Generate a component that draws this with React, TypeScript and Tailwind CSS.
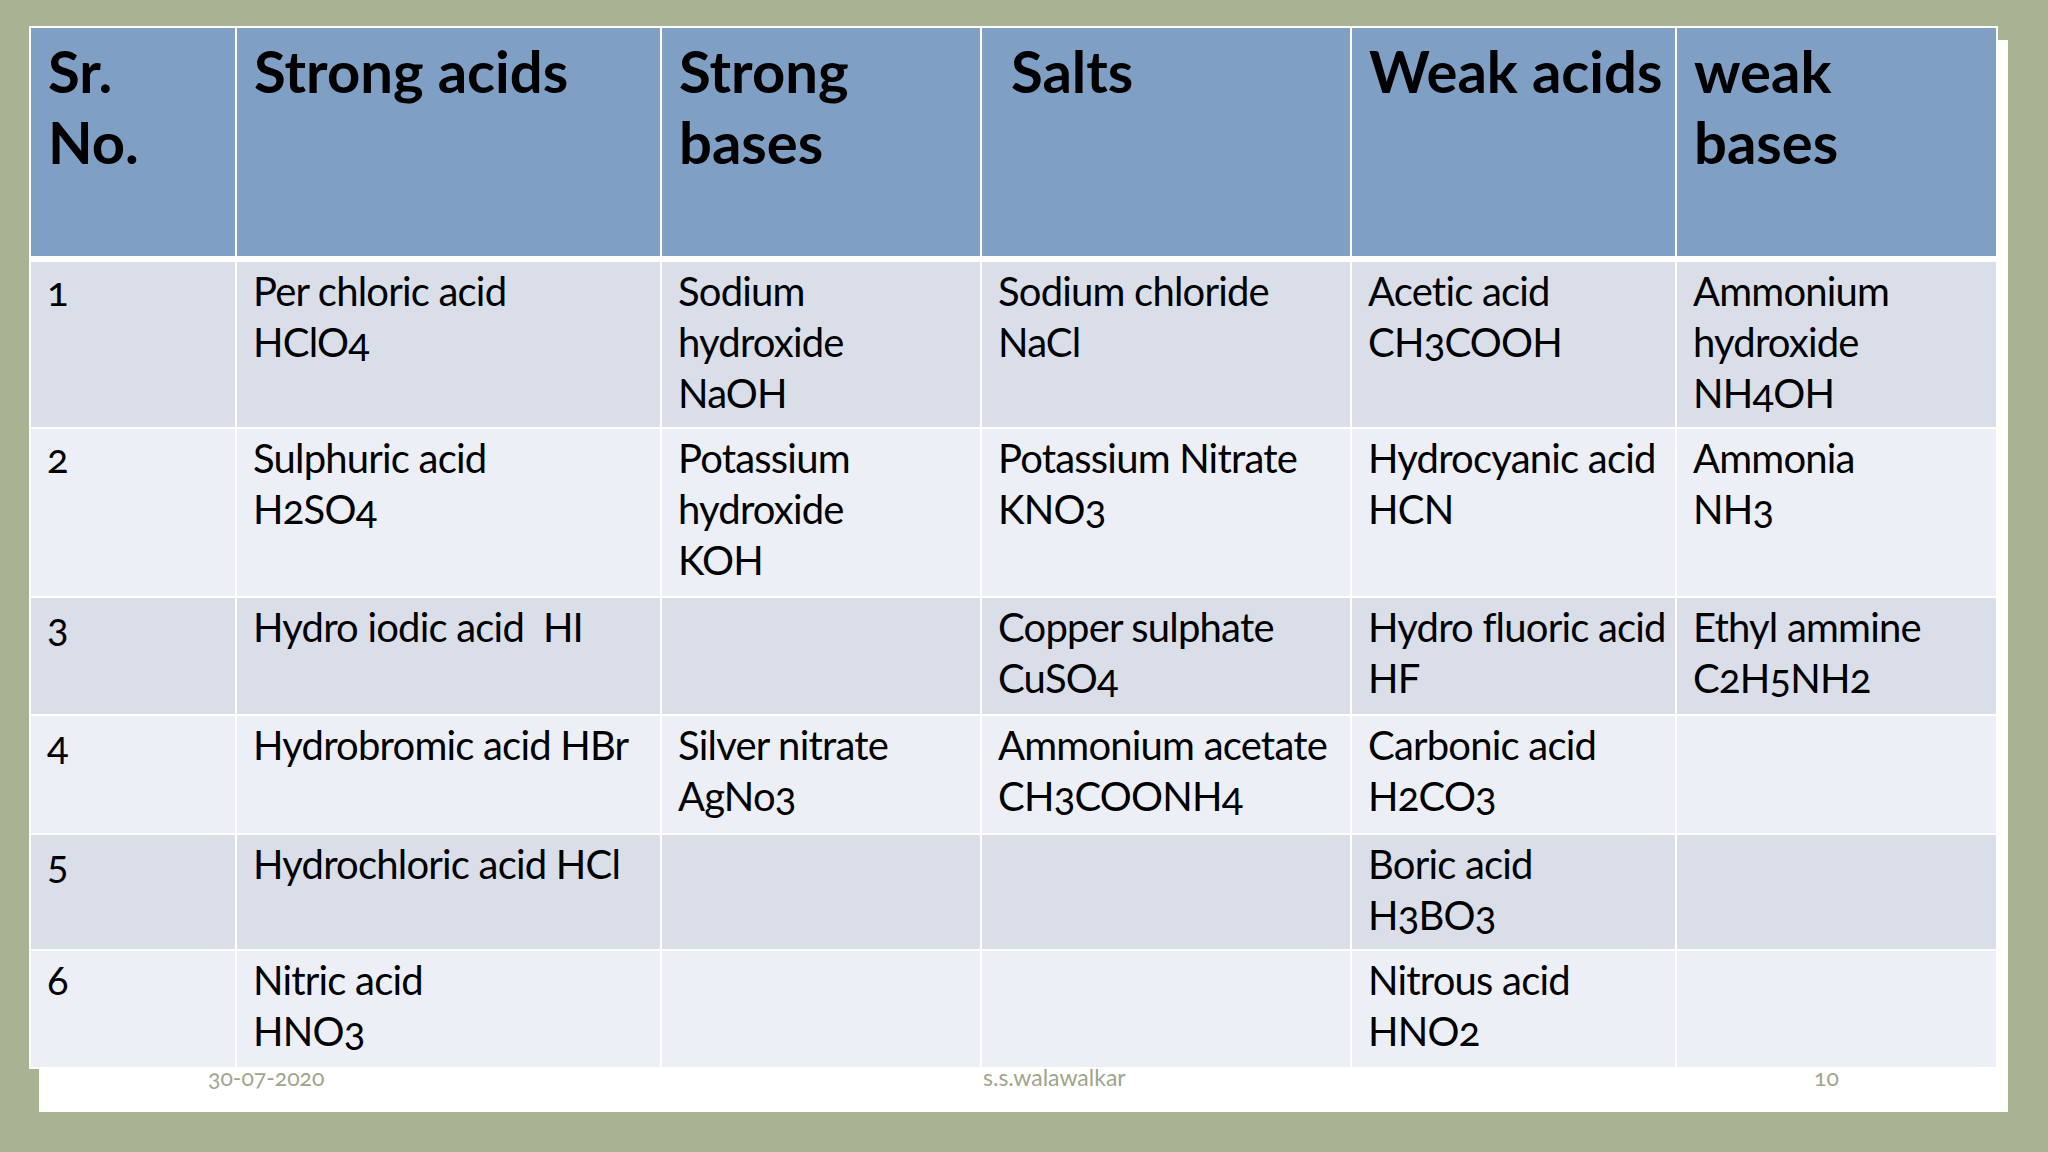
import React from 'react';

const headers: { label: React.ReactNode; extra?: string }[] = [
    { label: <>Sr.<br />No.</> },
    { label: 'Strong acids' },
    { label: <>Strong<br />bases</> },
    { label: 'Salts', extra: 'pl-[29px]' },
    { label: 'Weak acids' },
    { label: <>weak<br />bases</> },
];

// each cell is a list of lines
const rows: string[][][] = [
    [['1'], ['Per chloric acid', 'HClO4'], ['Sodium', 'hydroxide', 'NaOH'], ['Sodium chloride', 'NaCl'], ['Acetic acid', 'CH3COOH'], ['Ammonium', 'hydroxide', 'NH4OH']],
    [['2'], ['Sulphuric acid', 'H2SO4'], ['Potassium', 'hydroxide', 'KOH'], ['Potassium Nitrate', 'KNO3'], ['Hydrocyanic acid', 'HCN'], ['Ammonia', 'NH3']],
    [['3'], ['Hydro iodic acid\u00a0 HI'], [], ['Copper sulphate', 'CuSO4'], ['Hydro fluoric acid', 'HF'], ['Ethyl ammine', 'C2H5NH2']],
    [['4'], ['Hydrobromic acid HBr'], ['Silver nitrate', 'AgNo3'], ['Ammonium acetate', 'CH3COONH4'], ['Carbonic acid', 'H2CO3'], []],
    [['5'], ['Hydrochloric acid HCl'], [], [], ['Boric acid', 'H3BO3'], []],
    [['6'], ['Nitric acid', 'HNO3'], [], [], ['Nitrous acid', 'HNO2'], []],
];

const rowHeights = ['h-[165px]', 'h-[167px]', 'h-[116px]', 'h-[117px]', 'h-[114px]', 'h-[116px]'];

const cols = 'grid grid-cols-[204px_423px_318px_368px_323px_319px] gap-x-[2px]';

const App: React.FC = () => {
    return (
        <div className="w-[2048px] h-[1152px] bg-[#a8b393] pl-[39px] pt-[40px] font-['Lato',sans-serif] overflow-hidden">
            <div className="w-[1969px] h-[1072px] bg-white flex flex-col">
                <div className="-ml-[10px] -mt-[14px] w-[1969px] bg-white p-[2px] flex flex-col gap-[6px]">
                    <div className={`${cols} h-[228px]`}>
                        {headers.map((h, i) => (
                            <div key={i} className={`bg-[#7f9fc4] pt-[7px] pl-[17px] text-[58px] leading-[71px] font-bold text-black ${h.extra ?? ''}`}>
                                {h.label}
                            </div>
                        ))}
                    </div>
                    <div className="flex flex-col gap-y-[2px]">
                        {rows.map((row, r) => (
                            <div key={r} className={`${cols} ${rowHeights[r]}`}>
                                {row.map((cell, c) => (
                                    <div
                                        key={c}
                                        className={`${r % 2 === 0 ? 'bg-[#d9dee8]' : 'bg-[#eceff5]'} pt-[4px] pl-[16px] text-[40px] leading-[51px] tracking-[-0.02em] text-black oldstyle-nums whitespace-nowrap`}
                                    >
                                        {cell.map((line, k) => (
                                            <div key={k}>{line}</div>
                                        ))}
                                    </div>
                                ))}
                            </div>
                        ))}
                    </div>
                </div>
                <div className="flex mt-[-4px] text-[23px] leading-[24px] text-[#a0a58c] oldstyle-nums">
                    <span className="ml-[169px] w-[775px]">30-07-2020</span>
                    <span className="w-[831px]">s.s.walawalkar</span>
                    <span>10</span>
                </div>
            </div>
        </div>
    );
};

export default App;
